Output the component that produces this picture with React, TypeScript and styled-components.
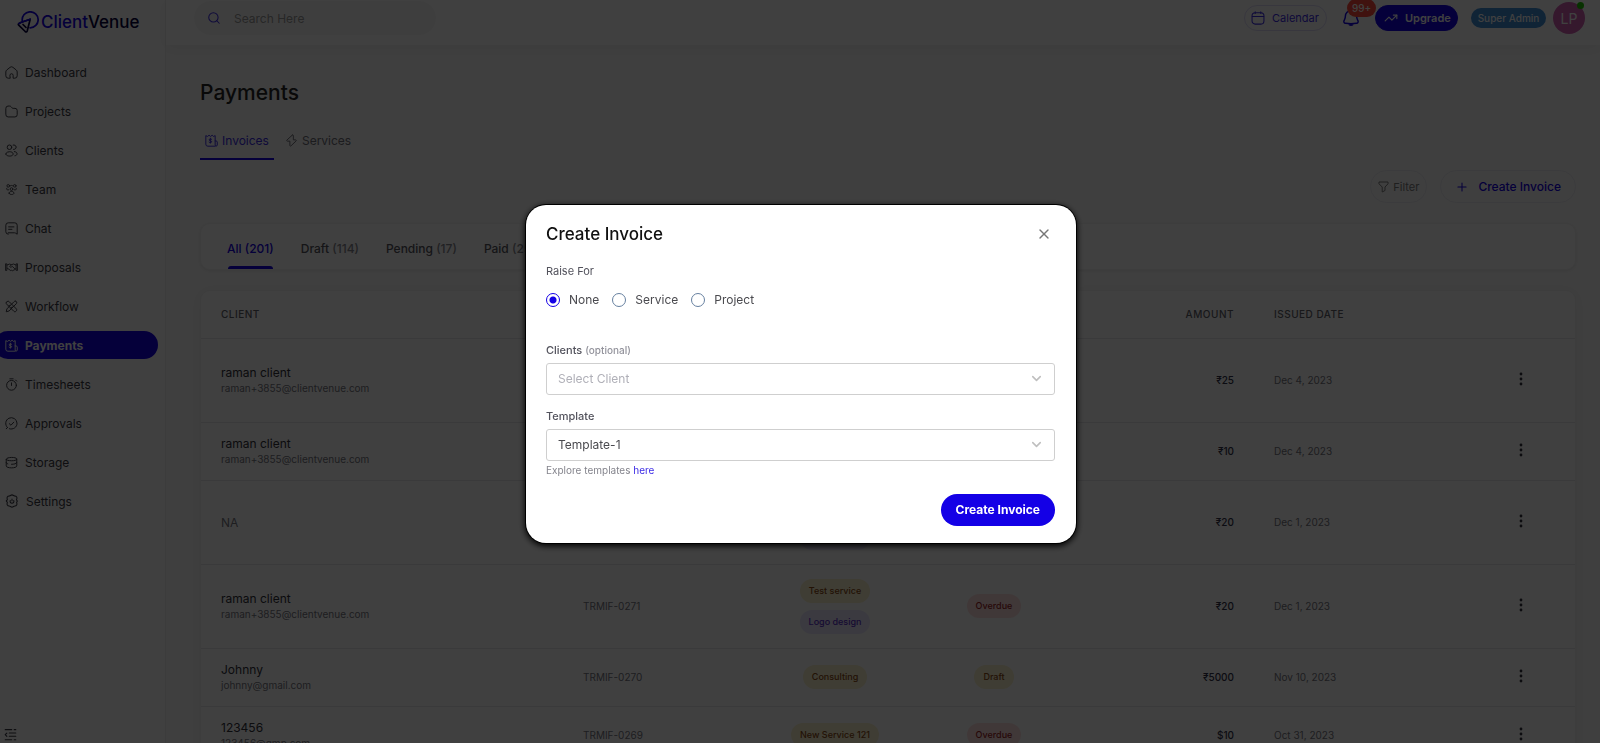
import React from 'react';
import styled, { createGlobalStyle } from 'styled-components';
import { Search, TrendingUp, Plus, X, ChevronDown } from 'lucide-react';

const ink = '#3b3b44';
const brand = '#1400e6';

const GlobalStyle = createGlobalStyle`
  * { box-sizing: border-box; }
  html, body, #root { height: 100%; }
  body { margin: 0; overflow: hidden; font-family: Inter, 'Liberation Sans', sans-serif; font-size: 12px; color: ${ink}; background: #fafafa; }
  button, input, select { font: inherit; color: inherit; }
  button { cursor: pointer; }
  svg { display: block; flex: none; }
`;

const Shell = styled.div`
  display: flex;
  height: 100vh;
  overflow: hidden;
`;

const Sidebar = styled.aside`
  flex: none;
  width: 166px;
  display: flex;
  flex-direction: column;
  overflow: hidden;
  background: #fff;
  border-right: 1px solid #f0f0f0;
`;

const Brand = styled.a`
  display: flex;
  align-items: center;
  gap: 2px;
  height: 44px;
  padding-left: 17px;
  font-size: 17px;
  font-weight: 500;
  color: #06003c;
  text-decoration: none;
`;
const BrandBlue = styled.span`
  color: ${brand};
`;

const Nav = styled.nav`
  display: flex;
  flex-direction: column;
  gap: 11px;
  margin-top: 14px;
`;

const NavLink = styled.a<{ $active?: boolean }>`
  display: flex;
  align-items: center;
  gap: 7px;
  height: 28px;
  margin: 0 7px 0 -6px;
  padding-left: 11px;
  border-radius: 14px;
  text-decoration: none;
  font-weight: ${p => (p.$active ? 700 : 400)};
  color: ${p => (p.$active ? '#fff' : ink)};
  background: ${p => (p.$active ? brand : 'transparent')};
`;

const Collapse = styled.button`
  margin-top: auto;
  padding: 0 0 2px 4px;
  border: 0;
  background: none;
`;

const Body = styled.div`
  flex: 1;
  min-width: 0;
`;

const Topbar = styled.header`
  display: flex;
  align-items: center;
  height: 45px;
  padding: 0 15px 9px 28px;
  background: #fff;
  box-shadow: 0 2px 14px rgba(0, 0, 0, 0.06);
`;

const SearchBox = styled.label`
  display: flex;
  align-items: center;
  gap: 13px;
  width: 242px;
  height: 34px;
  padding-left: 13px;
  border-radius: 17px;
  background: #f8f8f8;
  color: #3d2ce6;
`;
const SearchInput = styled.input`
  flex: 1;
  min-width: 0;
  border: 0;
  background: none;
  outline: 0;
  padding: 0;
  &::placeholder { color: #9a9a9a; opacity: 1; }
`;

const TopActions = styled.div`
  display: flex;
  align-items: center;
  margin-left: auto;
`;

const Pill = styled.button<{ $solid?: boolean }>`
  display: flex;
  align-items: center;
  gap: 7px;
  width: 83px;
  height: 26px;
  padding: 0 0 0 ${p => (p.$solid ? 8 : 6)}px;
  border: 1px solid ${p => (p.$solid ? brand : '#dedbf8')};
  border-radius: 13px;
  background: ${p => (p.$solid ? brand : 'transparent')};
  color: ${p => (p.$solid ? '#fff' : '#3d2ce6')};
  font-size: 11px;
  font-weight: ${p => (p.$solid ? 600 : 400)};
  white-space: nowrap;
`;

const BellButton = styled.button`
  position: relative;
  margin: 0 15px;
  padding: 0;
  border: 0;
  background: none;
  color: ${brand};
`;
const Count = styled.span`
  position: absolute;
  left: 5px;
  bottom: 10px;
  padding: 0 5px;
  border-radius: 9px;
  line-height: 18px;
  font-size: 10px;
  font-weight: 500;
  background: #ff4a3c;
  color: #fff;
`;

const Role = styled.span`
  margin: 0 7px 0 13px;
  width: 75px;
  text-align: center;
  border-radius: 10px;
  line-height: 20px;
  font-size: 10px;
  font-weight: 500;
  background: #418fd8;
  color: #fff;
`;

const Avatar = styled.span`
  position: relative;
  display: flex;
  align-items: center;
  justify-content: center;
  width: 32px;
  height: 32px;
  border-radius: 50%;
  background: #d261b4;
  color: #fff;
  font-size: 14px;
`;
const Online = styled.span`
  position: absolute;
  top: 0;
  right: 1px;
  width: 7px;
  height: 7px;
  border-radius: 50%;
  background: #1fc400;
`;

const Main = styled.main`
  padding: 34px 24px 0 34px;
`;

const PageTitle = styled.h1`
  margin: 0;
  font-size: 21px;
  line-height: 28px;
  font-weight: 500;
  color: #262626;
`;

const Tabs = styled.nav`
  display: flex;
  gap: 6px;
  margin-top: 19px;
`;
const Tab = styled.a<{ $active?: boolean }>`
  display: flex;
  align-items: center;
  gap: 4px;
  height: 34px;
  padding: 0 5px 4px;
  border-bottom: 2px solid ${p => (p.$active ? brand : 'transparent')};
  color: ${p => (p.$active ? '#3d2ce6' : '#6f6f78')};
  text-decoration: none;
`;

const Toolbar = styled.div`
  display: flex;
  justify-content: flex-end;
  gap: 13px;
  margin-top: 10px;
`;
const ToolButton = styled.button<{ $accent?: boolean }>`
  display: flex;
  align-items: center;
  gap: ${p => (p.$accent ? 9 : 4)}px;
  height: 33px;
  padding: 0 ${p => (p.$accent ? 14 : 7)}px;
  border: 1px solid #ebebf2;
  border-radius: 17px;
  background: #fcfcfc;
  color: ${p => (p.$accent ? brand : '#7d7d7d')};
  font-size: ${p => (p.$accent ? 12 : 11)}px;
  font-weight: ${p => (p.$accent ? 500 : 400)};
`;

const StatusBar = styled.nav`
  display: flex;
  gap: 27px;
  height: 47px;
  margin-top: 20px;
  padding: 0 26px;
  border: 1px solid #f3f3f3;
  border-radius: 10px;
  background: #fff;
  box-shadow: 0 1px 3px rgba(0, 0, 0, 0.08);
`;
const StatusLink = styled.a<{ $active?: boolean }>`
  display: flex;
  flex-direction: column;
  justify-content: space-between;
  padding-top: 17px;
  line-height: 16px;
  text-decoration: none;
  font-weight: 500;
  color: ${p => (p.$active ? brand : '#55555e')};
  &::after {
    content: '';
    height: 3px;
    margin: 0 1px;
    border-radius: 3px 3px 0 0;
    background: ${p => (p.$active ? brand : 'transparent')};
  }
`;
const Tally = styled.span<{ $active?: boolean }>`
  color: ${p => (p.$active ? brand : '#85858d')};
`;

const TableCard = styled.section`
  margin-top: 20px;
  border: 1px solid #f3f3f3;
  border-radius: 10px;
  background: #fff;
  box-shadow: 0 2px 14px rgba(0, 0, 0, 0.05);
`;

const Table = styled.table`
  width: 100%;
  table-layout: fixed;
  border-collapse: collapse;
`;
const Col = styled.col<{ $width: number }>`
  width: ${p => p.$width}px;
`;
const Head = styled.th<{ $align?: string }>`
  height: 47px;
  padding: 0 20px;
  text-align: ${p => p.$align || 'left'};
  font-size: 10px;
  font-weight: 500;
  letter-spacing: 0.5px;
  color: #5f5f6a;
`;
const Row = styled.tr<{ $tall?: boolean }>`
  height: ${p => (p.$tall ? 84 : 58)}px;
  border-top: 1px solid #e6e6ea;
`;
const Cell = styled.td<{ $align?: string; $strong?: boolean }>`
  padding: 0 20px;
  text-align: ${p => p.$align || 'left'};
  font-size: 10px;
  font-weight: ${p => (p.$strong ? 500 : 400)};
  color: ${p => (p.$strong ? '#33334a' : '#77777f')};
`;
const ClientName = styled.div`
  font-size: 12px;
  line-height: 16px;
  color: #30303a;
`;
const Missing = styled.div`
  font-size: 12px;
`;
const ClientMail = styled.div`
  line-height: 14px;
`;
const TagStack = styled.div`
  display: flex;
  flex-direction: column;
  align-items: center;
  gap: 7px;
`;
const tones = {
  amber: ['#fbf3cd', '#8a4b16'],
  violet: ['#eae6fd', '#5b2fc9'],
  red: ['#fde0e0', '#9c2525'],
};
type Tone = keyof typeof tones;
const Tag = styled.span<{ $tone: Tone }>`
  padding: 0 9px;
  border-radius: 12px;
  line-height: 24px;
  font-size: 9px;
  font-weight: 500;
  white-space: nowrap;
  background: ${p => tones[p.$tone][0]};
  color: ${p => tones[p.$tone][1]};
`;
const RowMenu = styled.button`
  display: inline-flex;
  padding: 0;
  border: 0;
  background: none;
  color: #33333d;
`;

const Backdrop = styled.div`
  position: fixed;
  inset: 0;
  display: flex;
  align-items: center;
  justify-content: center;
  padding: 4px 0 0 2px;
  background: rgba(0, 0, 0, 0.75);
`;
const Dialog = styled.form`
  width: 550px;
  max-width: 100%;
  padding: 15px 21px 17px 20px;
  border-radius: 20px;
  background: #fff;
  box-shadow: 0 0 0 1px #000, 0 2px 6px 1px #000;
`;
const DialogHead = styled.div`
  display: flex;
  align-items: center;
  justify-content: space-between;
`;
const DialogTitle = styled.h2`
  margin: 0;
  font-size: 17px;
  line-height: 28px;
  font-weight: 500;
  color: #111;
`;
const CloseButton = styled.button`
  padding: 3px;
  border: 0;
  background: none;
  color: #777;
`;
const RadioSet = styled.fieldset`
  margin: 14px 0 0;
  padding: 0;
  border: 0;
`;
const Legend = styled.legend`
  padding: 0;
  font-size: 11px;
  line-height: 18px;
  color: #52525c;
`;
const RadioRow = styled.div`
  display: flex;
  gap: 13px;
  margin-top: 10px;
`;
const RadioLabel = styled.label`
  display: flex;
  align-items: center;
  gap: 9px;
  line-height: 20px;
  color: #4a4a4f;
`;
const Radio = styled.input`
  appearance: none;
  width: 14px;
  height: 14px;
  margin: 0;
  border: 1px solid #66809f;
  border-radius: 50%;
  &:checked {
    border-color: ${brand};
    background: radial-gradient(circle, ${brand} 3px, #fff 4px);
  }
`;
const Field = styled.div<{ $first?: boolean }>`
  margin-top: ${p => (p.$first ? 31 : 12)}px;
`;
const FieldLabel = styled.label`
  display: block;
  margin-bottom: 4px;
  font-size: 11px;
  line-height: 18px;
  font-weight: 500;
  color: #52525c;
`;
const Optional = styled.span`
  font-size: 10px;
  color: #92929b;
`;
const SelectBox = styled.div`
  display: grid;
  align-items: center;
  color: #bfbfbf;
  & > * { grid-area: 1 / 1; }
  & > svg { justify-self: end; margin-right: 11px; pointer-events: none; }
`;
const Select = styled.select<{ $empty?: boolean }>`
  appearance: none;
  width: 100%;
  height: 32px;
  padding: 0 11px;
  border: 1px solid #cfcfcf;
  border-radius: 3px;
  background: #fff;
  color: ${p => (p.$empty ? '#b0b0b8' : '#4a4a4f')};
`;
const Hint = styled.p`
  margin: 1px 0 0;
  font-size: 10px;
  line-height: 16px;
  color: #85858d;
`;
const HintLink = styled.a`
  color: #3d2ce6;
  text-decoration: none;
`;
const DialogFoot = styled.div`
  display: flex;
  justify-content: flex-end;
  margin-top: 16px;
`;
const Submit = styled.button`
  height: 32px;
  padding: 0 15px;
  border: 0;
  border-radius: 16px;
  background: ${brand};
  color: #fff;
  font-weight: 700;
`;

type IconProps = { size?: number; weight?: number; children: React.ReactNode };
const Icon = ({ size = 13, weight = 1.2, children }: IconProps) => (
  <svg width={size} height={size} viewBox="0 0 16 16" fill="none" stroke="currentColor" strokeWidth={weight} strokeLinecap="round" strokeLinejoin="round">
    {children}
  </svg>
);

const LogoMark = () => (
  <svg width="22" height="22" viewBox="0 0 22 22" fill="none" strokeWidth="1.7" strokeLinejoin="round" strokeLinecap="round">
    <path d="M5.200 9.500A8 8 0 1 1 13 16.800" stroke={brand} />
    <path d="M13.200 8.200C9.500 9.700 5 11 2 12.400c-.9.5-.9 1.200-.3 1.800l6.500 6.300c.8.700 1.700.5 2-.5z" stroke="#06003c" />
    <path d="M13.200 8.200C9.500 9.700 5 11 2 12.400" stroke={brand} />
    <path d="M6 13.500 9 16.500" stroke="#06003c" />
  </svg>
);

const InvoiceIcon = () => (
  <Icon>
    <path d="M12.500 15H3.500A2.500 2.500 0 0 1 1 12.500V2l2 1 2-1.500L6.800 3l2-1.500L10.500 3 12.500 2v11.500a1.300 1.300 0 0 0 2.600 0V10c0-.8-.6-1.500-1.400-1.500h-1.200" />
    <path d="M8.200 6.500C7.500 5.800 5 6 5 7.300 5 8.700 8.200 7.800 8.200 9.500c0 1.300-2.500 1.500-3.300.6M6.600 5.200v6" />
  </Icon>
);

const HomeIcon = () => (
  <Icon><path d="M6 15H4a3 3 0 0 1-3-3V7.300c0-1 .5-1.900 1.300-2.500L6.300 1.600a2.800 2.800 0 0 1 3.400 0l4 3.200c.8.600 1.300 1.500 1.300 2.500V12a3 3 0 0 1-3 3h-2v-3.500a2 2 0 0 0-4 0z" /></Icon>
);
const FolderIcon = () => (
  <Icon><path d="M1 4a2.700 2.700 0 0 1 2.700-2.700h2c.8 0 1.300.3 1.800.9l1 1.200c.4.500.9.700 1.500.7h2.300A2.700 2.700 0 0 1 15 6.800v5a2.800 2.800 0 0 1-2.800 2.900H3.800A2.800 2.800 0 0 1 1 11.800z" /></Icon>
);
const ClientsIcon = () => (
  <Icon>
    <circle cx="5.500" cy="4" r="2.800" />
    <path d="M10 1.300a2.800 2.800 0 1 1 .5 5.400M1 12.300C1 8.500 10 8.500 10 12.300c0 3.500-9 3.500-9 0M11.500 9.300c4.500.2 4.500 5 .7 5.200" />
  </Icon>
);
const TeamIcon = () => (
  <Icon weight={1.1}>
    <circle cx="4" cy="3.500" r="1.600" />
    <circle cx="12" cy="3.500" r="1.600" />
    <circle cx="8" cy="7.500" r="1.700" />
    <path d="M4.500 8.500C2.500 9 1 7.500 2.300 6.200M11.500 8.500c2 .5 3.500-1 2.200-2.300M6.500 3.500c.8-.8 2.200-.8 3 0M5 12.500c0-3 6-3 6 0 0 2.300-6 2.300-6 0z" />
  </Icon>
);
const ChatIcon = () => (
  <Icon><path d="M4 15a3 3 0 0 1-3-3V4a3 3 0 0 1 3-3h8a3 3 0 0 1 3 3v11l-2-1.300c-.4-.2-.8-.4-1.300-.4H4M4.500 6h6.500M4.500 9h4" /></Icon>
);
const HandshakeIcon = () => (
  <Icon weight={1.1}>
    <path d="M.5 4v7.500h1.800V4zM15.500 4v7.500h-1.800V4zM2.500 5l3-1.200L8 4.500l2.500-.8 3 1.300M8 4.500 5.800 7c.8 1 2 .8 3-.5l3.500 3.200c.5.600-.2 1.500-1 1l-1.800 1.300-1.300-.6-1 .5L3.500 9.300l-1-.5M12.500 10l1-.7" />
  </Icon>
);
const WorkflowIcon = () => (
  <Icon>
    <path d="M2 2.500c1-1.500 2.500-1.200 3.300-.3L14 11c1.500 1.600-1.200 4.600-3 3L2 5c-.8-.8-.8-1.600 0-2.500zM4.500 7.500l1.300-1.300M7 10l1.500-1.500M13.500 1.700c1.300 1 1.300 2 .3 3L5 13.500 1.500 14.500l.8-3.500L11 2.200c.8-.9 1.700-1.100 2.500-.5z" />
  </Icon>
);
const TimerIcon = () => (
  <Icon><circle cx="8" cy="9" r="6" /><path d="M8 6v3.200M6 1h4M13 2.500l1.300 1.300" /></Icon>
);
const ApprovalIcon = () => (
  <Icon><path d="M3 13A7 7 0 1 1 5.500 14.500M1.500 14.500 3 13M5.300 8.200l2 1.900 3.500-3.700" /></Icon>
);
const StorageIcon = () => (
  <Icon><path d="M1.500 3.800C1.500 1 14.500 1 14.500 3.800s-13 2.700-13 0v8.400c0 3.200 13 3.200 13 0V3.800M14.500 8c0 1.600-3.500 2.200-6.500 2.200M1.500 8c0 .8.800 1.300 2 1.700" /></Icon>
);
const SettingsIcon = () => (
  <Icon size={14}>
    <path d="M4.700 2.300c1.300 0 1.800-1.300 3.300-1.300s2 1.300 3.300 1.300c1.800 0 3 2 2.100 3.500-.8 1.300.1 1.300.6 2.200s-1.400 0.900-.6 2.200c.9 1.500-.3 3.500-2.100 3.500C10 13.700 9.500 15 8 15s-2-1.300-3.300-1.300c-1.800 0-3-2-2.100-3.500.8-1.300-1.100-1.300-1.100-2.200s1.900-.9 1.100-2.200c-.9-1.500.3-3.500 2.100-3.500z" />
    <path d="M6 7.500a2.200 2.200 0 1 0 4 0M8 5.800v2" />
  </Icon>
);
const CollapseIcon = () => (
  <Icon weight={1.4}><path d="M1.500 2h8M12.500 2h2M6.500 6.200h8M6.500 10.200h8M1.500 14.500h8M12.500 14.500h2M3.500 6.200 1.500 8.200l2 2" /></Icon>
);
const CalendarIcon = () => (
  <Icon size={14}><rect x="1.200" y="2" width="13.600" height="13" rx="3.500" /><path d="M1.500 6.300h13M4.800 1v1.800M11.200 1v1.800" /></Icon>
);
const BellIcon = () => (
  <Icon size={18} weight={1.3}><path d="M8 1.500A5 5 0 0 0 3 6.500c0 2-.5 2.700-1.100 3.700-.7 1.200 0 2.300 1.200 2.500 3.200.5 6.600.5 9.800 0 1.200-.2 1.900-1.300 1.200-2.500-.6-1-1.100-1.700-1.100-3.700a5 5 0 0 0-5-5zM6 13.200c.4 1.700 3.600 1.700 4 0" /></Icon>
);
const BoltIcon = () => (
  <Icon><path d="M8.800 1.500 2.500 7.300c-.8.800-.5 1.500.6 1.500H6v5c0 1.200.7 1.500 1.500.7l6-5.800c.8-.8.500-1.500-.6-1.500H10.300V2.200c0-1.200-.7-1.500-1.500-.7z" /></Icon>
);
const FilterIcon = () => (
  <svg width="11" height="12" viewBox="0 0 11 12" fill="none" stroke="currentColor" strokeLinejoin="round">
    <path d="M1 1h9v1.800L7 6v3.500L4.200 11V6L1 2.800z" />
  </svg>
);
const DotsIcon = () => (
  <svg width="4" height="14" viewBox="0 0 4 14" fill="currentColor">
    <circle cx="2" cy="2" r="1.400" /><circle cx="2" cy="7" r="1.400" /><circle cx="2" cy="12" r="1.400" />
  </svg>
);

const navItems = [
  { label: 'Dashboard', icon: <HomeIcon /> },
  { label: 'Projects', icon: <FolderIcon /> },
  { label: 'Clients', icon: <ClientsIcon /> },
  { label: 'Team', icon: <TeamIcon /> },
  { label: 'Chat', icon: <ChatIcon /> },
  { label: 'Proposals', icon: <HandshakeIcon /> },
  { label: 'Workflow', icon: <WorkflowIcon /> },
  { label: 'Payments', icon: <InvoiceIcon />, active: true },
  { label: 'Timesheets', icon: <TimerIcon /> },
  { label: 'Approvals', icon: <ApprovalIcon /> },
  { label: 'Storage', icon: <StorageIcon /> },
  { label: 'Settings', icon: <SettingsIcon /> },
];

const statuses = [
  { label: 'All', count: 201, active: true },
  { label: 'Draft', count: 114 },
  { label: 'Pending', count: 17 },
  { label: 'Paid', count: 25 },
];

const columnWidths = [362, 187, 170, 148, 186, 212, 109];

type Invoice = {
  client?: string; mail?: string; number: string; tags: [string, Tone][];
  status: [string, Tone]; amount: string; date: string;
};
const twoServices: [string, Tone][] = [['Test service', 'amber'], ['Logo design', 'violet']];
const invoices: Invoice[] = [
  { client: 'raman client', mail: 'raman+3855@clientvenue.com', number: 'TRMIF-0274', tags: twoServices, status: ['Overdue', 'red'], amount: '₹25', date: 'Dec 4, 2023' },
  { client: 'raman client', mail: 'raman+3855@clientvenue.com', number: 'TRMIF-0273', tags: [['Consulting', 'amber']], status: ['Overdue', 'red'], amount: '₹10', date: 'Dec 4, 2023' },
  { number: 'TRMIF-0272', tags: twoServices, status: ['Draft', 'amber'], amount: '₹20', date: 'Dec 1, 2023' },
  { client: 'raman client', mail: 'raman+3855@clientvenue.com', number: 'TRMIF-0271', tags: twoServices, status: ['Overdue', 'red'], amount: '₹20', date: 'Dec 1, 2023' },
  { client: 'Johnny', mail: 'johnny@gmail.com', number: 'TRMIF-0270', tags: [['Consulting', 'amber']], status: ['Draft', 'amber'], amount: '₹5000', date: 'Nov 10, 2023' },
  { client: '123456', mail: '123456@gmp.com', number: 'TRMIF-0269', tags: [['New Service 121', 'amber']], status: ['Overdue', 'red'], amount: '$10', date: 'Oct 31, 2023' },
];

export default function App() {
  return (
    <>
      <GlobalStyle />
      <Shell>
        <Sidebar>
          <Brand href="#"><LogoMark /><span><BrandBlue>Client</BrandBlue>Venue</span></Brand>
          <Nav>
            {navItems.map(n => (
              <NavLink key={n.label} href="#" $active={n.active}>{n.icon}{n.label}</NavLink>
            ))}
          </Nav>
          <Collapse type="button" aria-label="Collapse menu"><CollapseIcon /></Collapse>
        </Sidebar>
        <Body>
          <Topbar>
            <SearchBox>
              <Search size={14} strokeWidth={1.8} />
              <SearchInput type="text" placeholder="Search Here" aria-label="Search" />
            </SearchBox>
            <TopActions>
              <Pill type="button"><CalendarIcon />Calendar</Pill>
              <BellButton type="button" aria-label="Notifications"><BellIcon /><Count>99+</Count></BellButton>
              <Pill type="button" $solid><TrendingUp size={14} />Upgrade</Pill>
              <Role>Super Admin</Role>
              <Avatar>LP<Online /></Avatar>
            </TopActions>
          </Topbar>
          <Main>
            <PageTitle>Payments</PageTitle>
            <Tabs>
              <Tab href="#" $active><InvoiceIcon />Invoices</Tab>
              <Tab href="#"><BoltIcon />Services</Tab>
            </Tabs>
            <Toolbar>
              <ToolButton type="button"><FilterIcon />Filter</ToolButton>
              <ToolButton type="button" $accent><Plus size={14} strokeWidth={1.8} />Create Invoice</ToolButton>
            </Toolbar>
            <StatusBar>
              {statuses.map(s => (
                <StatusLink key={s.label} href="#" $active={s.active}>
                  <span>{s.label} <Tally $active={s.active}>({s.count})</Tally></span>
                </StatusLink>
              ))}
            </StatusBar>
            <TableCard>
              <Table>
                <colgroup>{columnWidths.map(w => <Col key={w} $width={w} />)}</colgroup>
                <thead>
                  <tr>
                    <Head>CLIENT</Head>
                    <Head>INVOICE</Head>
                    <Head $align="center">SERVICES</Head>
                    <Head $align="center">STATUS</Head>
                    <Head $align="right">AMOUNT</Head>
                    <Head>ISSUED DATE</Head>
                    <Head aria-label="Actions" />
                  </tr>
                </thead>
                <tbody>
                  {invoices.map(inv => (
                    <Row key={inv.number} $tall={inv.tags.length > 1}>
                      <Cell>
                        {inv.client ? <><ClientName>{inv.client}</ClientName><ClientMail>{inv.mail}</ClientMail></> : <Missing>NA</Missing>}
                      </Cell>
                      <Cell>{inv.number}</Cell>
                      <Cell $align="center">
                        <TagStack>{inv.tags.map(([t, tone]) => <Tag key={t} $tone={tone}>{t}</Tag>)}</TagStack>
                      </Cell>
                      <Cell $align="center"><TagStack><Tag $tone={inv.status[1]}>{inv.status[0]}</Tag></TagStack></Cell>
                      <Cell $align="right" $strong>{inv.amount}</Cell>
                      <Cell>{inv.date}</Cell>
                      <Cell $align="center"><RowMenu type="button" aria-label="Row actions"><DotsIcon /></RowMenu></Cell>
                    </Row>
                  ))}
                </tbody>
              </Table>
            </TableCard>
          </Main>
        </Body>
      </Shell>
      <Backdrop>
        <Dialog role="dialog" aria-labelledby="dialog-title">
          <DialogHead>
            <DialogTitle id="dialog-title">Create Invoice</DialogTitle>
            <CloseButton type="button" aria-label="Close"><X size={16} strokeWidth={2} /></CloseButton>
          </DialogHead>
          <RadioSet>
            <Legend>Raise For</Legend>
            <RadioRow>
              <RadioLabel><Radio type="radio" name="raise" defaultChecked />None</RadioLabel>
              <RadioLabel><Radio type="radio" name="raise" />Service</RadioLabel>
              <RadioLabel><Radio type="radio" name="raise" />Project</RadioLabel>
            </RadioRow>
          </RadioSet>
          <Field $first>
            <FieldLabel htmlFor="client">Clients <Optional>(optional)</Optional></FieldLabel>
            <SelectBox>
              <Select id="client" $empty><option>Select Client</option></Select>
              <ChevronDown size={15} strokeWidth={2.5} />
            </SelectBox>
          </Field>
          <Field>
            <FieldLabel htmlFor="template">Template</FieldLabel>
            <SelectBox>
              <Select id="template"><option>Template-1</option></Select>
              <ChevronDown size={15} strokeWidth={2.5} />
            </SelectBox>
            <Hint>Explore templates <HintLink href="#">here</HintLink></Hint>
          </Field>
          <DialogFoot><Submit type="submit">Create Invoice</Submit></DialogFoot>
        </Dialog>
      </Backdrop>
    </>
  );
}
